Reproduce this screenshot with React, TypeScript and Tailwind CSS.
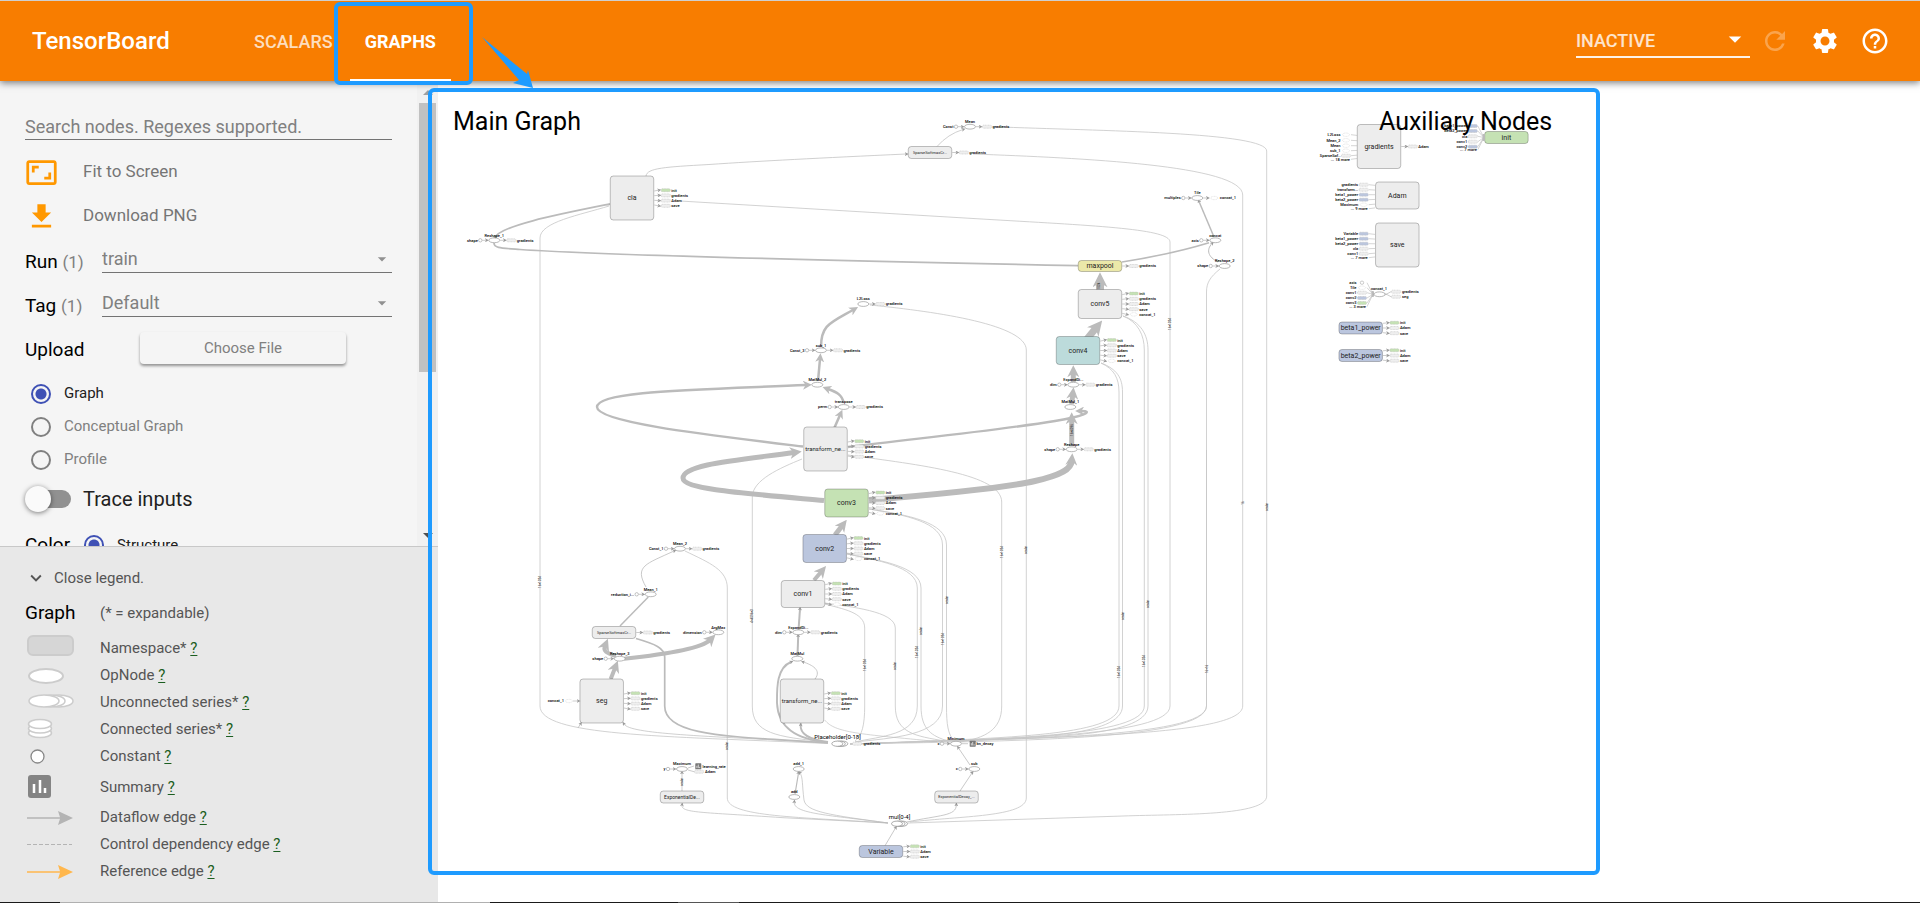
import { useState } from 'react';
import type { ReactNode } from 'react';
import { MdSettings, MdRefresh, MdHelpOutline, MdKeyboardArrowDown, MdArrowDropDown } from 'react-icons/md';

const GREY = '#ededed';
const GREEN = '#c5e2b4';
const BLUE = '#bbc6de';
const TEAL = '#bcdbdb';
const YELLOW = '#ebe8a9';

type Anno = { name: string; kind?: 'box' | 'op' | 'const'; fill?: string };

const init: Anno = { name: 'init', fill: GREEN };
const gradients: Anno = { name: 'gradients' };
const adam: Anno = { name: 'Adam' };
const save: Anno = { name: 'save' };
const concat1: Anno = { name: 'concat_1', kind: 'op' };
const fourOuts = [init, gradients, adam, save];
const fiveOuts = [init, gradients, adam, save, concat1];
const varOuts = [init, adam, save];

type BoxNode = { x: number; y: number; w?: number; h: number; label: string; size: number; fill?: string; outs?: Anno[] };

const boxes: BoxNode[] = [
  { x: 632, y: 198, h: 44, label: 'cla', size: 7, outs: fourOuts },
  { x: 930, y: 152.5, h: 12, label: 'SparseSoftmaxCr...', size: 4, outs: [gradients] },
  { x: 1100, y: 266, h: 11, label: 'maxpool', size: 7, fill: YELLOW, outs: [gradients] },
  { x: 1100, y: 304, h: 29, label: 'conv5', size: 7, outs: fiveOuts },
  { x: 1078, y: 350.5, h: 28, label: 'conv4', size: 7, fill: TEAL, outs: fiveOuts },
  { x: 825.5, y: 449, h: 44, label: 'transform_ne...', size: 6, outs: fourOuts },
  { x: 846.5, y: 503, h: 28, label: 'conv3', size: 7, fill: GREEN, outs: fiveOuts },
  { x: 824.7, y: 548.5, h: 28, label: 'conv2', size: 7, fill: BLUE, outs: fiveOuts },
  { x: 803, y: 594, h: 27, label: 'conv1', size: 7, outs: fiveOuts },
  { x: 802, y: 701, h: 44, label: 'transform_ne...', size: 6, outs: fourOuts },
  { x: 601.7, y: 701, h: 44, label: 'seg', size: 7, outs: fourOuts },
  { x: 614, y: 632.5, h: 12, label: 'SparseSoftmaxCr...', size: 4, outs: [gradients] },
  { x: 682, y: 797, h: 12, label: 'ExponentialDe...', size: 5 },
  { x: 956.5, y: 797, h: 12, label: 'ExponentialDecay_...', size: 4 },
  { x: 881, y: 851.5, h: 12, label: 'Variable', size: 7, fill: BLUE, outs: varOuts },
  { x: 1360.7, y: 328, h: 12, label: 'beta1_power', size: 7, fill: BLUE, outs: varOuts },
  { x: 1360.7, y: 355.5, h: 12, label: 'beta2_power', size: 7, fill: BLUE, outs: varOuts },
  { x: 1379, y: 146.5, h: 44, label: 'gradients', size: 7, outs: [adam] },
  { x: 1397.3, y: 195.5, h: 27, label: 'Adam', size: 7 },
  { x: 1397.3, y: 245, h: 44, label: 'save', size: 7 },
  { x: 1506.4, y: 137.5, h: 12, label: 'init', size: 7, fill: GREEN },
];

type OpData = { x: number; y: number; label: string; input?: string; out?: Anno };

const ops: OpData[] = [
  { x: 970, y: 126.7, label: 'Mean', input: 'Const', out: gradients },
  { x: 494.3, y: 240.3, label: 'Reshape_1', input: 'shape', out: gradients },
  { x: 863.3, y: 304, label: 'L2Loss', out: gradients },
  { x: 821, y: 350.3, label: 'sub_1', input: 'Const_3', out: gradients },
  { x: 817.3, y: 384.7, label: 'MatMul_2' },
  { x: 843.7, y: 407, label: 'transpose', input: 'perm', out: gradients },
  { x: 1073.3, y: 384.7, label: 'ExpandDi...', input: 'dim', out: gradients },
  { x: 1070.3, y: 407, label: 'MatMul_1' },
  { x: 1071.7, y: 449.3, label: 'Reshape', input: 'shape', out: gradients },
  { x: 1197.3, y: 198, label: 'Tile', input: 'multiples', out: concat1 },
  { x: 1215.3, y: 240.3, label: 'concat', input: 'axis' },
  { x: 1224.7, y: 266, label: 'Reshape_2', input: 'shape' },
  { x: 798.3, y: 632.3, label: 'ExpandDi...', input: 'dim', out: gradients },
  { x: 797.3, y: 658.7, label: 'MatMul' },
  { x: 619.7, y: 658.7, label: 'Reshape_3', input: 'shape' },
  { x: 718.3, y: 632.3, label: 'ArgMax', input: 'dimension' },
  { x: 650.7, y: 594.3, label: 'Mean_1', input: 'reduction_i...' },
  { x: 680, y: 548.7, label: 'Mean_2', input: 'Const_1', out: gradients },
  { x: 682, y: 769, label: 'Maximum', input: 'y' },
  { x: 798.7, y: 769, label: 'add_1' },
  { x: 794.3, y: 797, label: 'add' },
  { x: 956, y: 743.7, label: 'Minimum', input: 'x' },
  { x: 974.3, y: 769, label: 'sub', input: 'x' },
];

// [path, stroke width, arrow size]
const edges: [string, number, 's' | 'm' | 'l' | 'x' | ''][] = [
  ['M937 146.5 Q948 134 963 129.5', 0.7, 's'],
  ['M646 176 C647 168 665 167 709 164.5 C760 161 820 158 906 154', 0.7, 's'],
  ['M610 204 C560 214 498 226 495 238', 1.8, 's'],
  ['M494 243 C494 248 500 248 520 249.5 C600 255 800 260 1078 265.7', 1.7, ''],
  ['M821 347 C821 325 830 323 853 310', 2.5, 'm'],
  ['M818 381 L820 359', 2.5, 'm'],
  ['M843.7 403 C842 394 836 392 828 389', 2.5, 'm'],
  ['M834.3 428 L840 415', 2.5, 'm'],
  ['M803 446.5 C700 434 597 422 597 407 C597 391 690 390 806 385', 2.4, 'm'],
  ['M848 447 C930 437 1000 430 1055 421 C1085 416 1094 411 1081 411', 2.4, 'm'],
  ['M824 500.5 C740 493 683 489 683 478 C683 464 740 460 794 452.5', 5, 'l'],
  ['M869 500 C930 495 1000 489 1035 481 C1062 475 1071 469 1071.7 461', 6, 'l'],
  ['M1071.7 446 V420', 5, 'l'],
  ['M1071.7 404 L1072.7 395', 5, 'l'],
  ['M1073.3 382 V373', 5, 'l'],
  ['M1087 339 L1096 328', 7, 'x'],
  ['M1100 290 V282', 8, 'x'],
  ['M1122 262 C1160 256 1185 250 1209 242.7', 1.6, ''],
  ['M1214 237 L1199 201.5', 1.5, 's'],
  ['M1218 262 C1208 257 1206 250 1212 243.5', 1, 's'],
  ['M814 580.3 L821 572', 4, 'l'],
  ['M835 535 L842 526', 5, 'l'],
  ['M798.5 630 L800 609', 2, 's'],
  ['M797.5 656 L798.2 636', 2, 's'],
  ['M828 742.5 C795 739 778 727 777 703 C777 690 776 668 791 662', 1.9, 's'],
  ['M815 679 C822 670 812 665 803.5 662', 0.8, 's'],
  ['M828 742 C805 739 800 732 800.7 725', 1.9, 's'],
  ['M624 658.7 C650 656 700 650 710 640', 4, 'l'],
  ['M616 656 C606 653 603 651 605 646', 4, 'l'],
  ['M610.7 679 L615 668', 4, 'l'],
  ['M620 626 L648.3 597', 1.5, ''],
  ['M646 587 C634 566 646 564 674 551', 0.8, 's'],
  ['M636 638.5 C655 644 664.7 648 664.7 657 V706 C664.7 737 730 736 828 743', 1.7, ''],
  ['M682 791 V773', 0.7, 's'],
  ['M888 823 L783 817.7 C700 812 681 813 682 805', 0.7, 's'],
  ['M795 794 L798.5 773', 1.2, 's'],
  ['M888 823 C830 815 806 812 804 800 C802 785 803 777 800 773', 0.7, 's'],
  ['M888 823 C830 815 793 814 794.3 802', 0.7, 's'],
  ['M885 845.7 L895.5 828', 0.8, 's'],
  ['M906.7 822 C940 815 956.3 816 956.3 805', 0.8, 's'],
  ['M960 791 L972 773', 0.8, 's'],
  ['M970 765 L958.5 748', 0.8, 's'],
  ['M824.7 720 C835 733 860 734 937 741.5', 0.6, ''],
  ['M828 742.5 C700 736 630 734 624 724', 0.7, 's'],
  ['M578 728 L580.5 724', 0.8, 's'],
];

// thin edges that run down the sides and join the placeholders at the bottom
const loops = [
  'M993 126.7 C1100 131 1266.7 132 1266.7 151 V796 C1266.7 816 1180 814 1123 816 L908 823',
  'M973 154 C1080 158 1242.7 165 1242.7 195 V706 C1242.7 737 1050 737 850 744',
  'M680 201 L990 219.5 C1100 226 1170 229 1170 242 V706 C1170 737 1000 739 850 744',
  'M609 206 C580 215 540 222 540 238 V706 C540 736 660 736 828 743.5',
  'M870 305 C940 312 1026.3 325 1026.3 350 V798 C1026.3 817 960 816 910 822',
  'M1220 269 C1210 277 1206.5 283 1206.5 292 V706 C1206.5 739 1000 739 850 744',
  'M1206.5 450 V706 C1206.5 741 1000 741 850 744',
  'M1123 316 C1138 322 1144.3 335 1144.3 350 V706 C1144.3 737 1000 739 850 744',
  'M1123 316 C1141 322 1148 335 1148 350 V706 C1148 740 1020 737 960 741',
  'M1101 363 C1114 369 1119 378 1119 392 V706 C1119 737 1000 738 850 744',
  'M1101 363 C1117 369 1122.5 378 1122.5 392 V706 C1122.5 738 1020 737 960 741',
  'M869 509 C905 515 942.5 522 942.5 545 V706 C942.5 736 890 738 855 742',
  'M869 509 C908 515 946.5 522 946.5 545 V706 C946.5 725 948 734 954 741',
  'M847 554 C875 560 917.3 566 917.3 588 V706 C917.3 736 880 736 855 742',
  'M847 554 C878 560 921 566 921 588 V706 C921 730 932 736 948 741',
  'M825 604 C842 609 864.7 612 864.7 628 V706 C864.7 725 862 736 855 741',
  'M825 603 C850 607 895.3 611 895.3 628 V706 C895.3 733 915 736 945 741',
  'M802 459 C780 468 752.3 480 752.3 497 V706 C752.3 733 775 737 828 742',
  'M848 455 C920 465 1001.7 474 1001.7 502 V706 C1001.7 730 985 738 960 742',
  'M685 551 C710 563 727.3 570 727.3 588 V798 C727.3 817 800 817 888 823',
];

const edgeLabels: [number, number, string][] = [
  [540, 582, '16×1024'], [752.3, 616, '4×4096×3'], [727.3, 746, 'scalar'], [864.7, 665, '16×1024'],
  [895.3, 666, 'scalar'], [917.3, 652, '16×1024'], [921, 631, 'scalar'], [942.5, 639, '16×1024'],
  [946.5, 600, 'scalar'], [1001.7, 552, '16×1024'], [1026.3, 550, 'scalar'], [1119, 672, '16×1024'],
  [1122.5, 616, 'scalar'], [1144.3, 661, '16×1024'], [1148, 604, 'scalar'], [1206.5, 669, '16×16'],
  [1242.7, 503, '16'], [1266.7, 507, 'scalar'], [1170, 324, '16×1024'], [682, 782, 'scalar'],
  [1099, 286, '1024'], [1071.7, 430, '16×4096'],
];

const Caption = ({ x, y, text, anchor = 'start' }: { x: number; y: number; text: string; anchor?: 'start' | 'middle' | 'end' }) => (
  <text x={x} y={y} fontSize="4" textAnchor={anchor} fontWeight="500">{text}</text>
);

// little icon that stands for a neighbour node
function Mini({ x, y, anno }: { x: number; y: number; anno: Anno }) {
  if (anno.kind === 'op') return <ellipse cx={x} cy={y} rx="3.5" ry="1.7" fill="white" stroke="#ccc" strokeWidth="0.5" strokeDasharray="1 0.5" />;
  if (anno.kind === 'const') return <circle cx={x} cy={y} r="1.7" fill="white" stroke="#999" strokeWidth="0.5" />;
  return <rect x={x - 4.5} y={y - 1.5} width="9" height="3" rx="1" fill={anno.fill ?? '#efefef'} stroke="#bbb" strokeWidth="0.5" strokeDasharray="1 0.5" />;
}

function Outs({ x, y, items }: { x: number; y: number; items: Anno[] }) {
  return (
    <>
      {items.map((anno, i) => {
        const ay = y + (i - (items.length - 1) / 2) * 5.2;
        return (
          <g key={anno.name}>
            <path d={`M${x + 0.5} ${y + (ay - y) * 0.9} L${x + 5} ${ay}`} stroke="#999" strokeWidth="0.5" markerEnd="url(#arrow-s)" />
            <Mini x={x + 12} y={ay} anno={anno} />
            <Caption x={x + 17.5} y={ay + 1.4} text={anno.name} />
          </g>
        );
      })}
    </>
  );
}

function Ins({ x, y, items, target }: { x: number; y: number[]; items: Anno[]; target: [number, number] }) {
  return (
    <>
      {items.map((anno, i) => {
        const last = i === items.length - 1;
        return (
          <g key={anno.name}>
            <path d={`M${x + 5} ${y[i]} L${target[0]} ${target[1] + (y[i] - target[1]) * (target[1] > 290 || target[1] < 140 ? 0.15 : 0.94)}`} stroke="#aaa" strokeWidth="0.5" />
            {!last && <Mini x={x} y={y[i]} anno={anno} />}
            <Caption x={last ? x + 4 : x - 5.5} y={y[i] + 1.4} text={anno.name} anchor="end" />
          </g>
        );
      })}
    </>
  );
}

function Box({ x, y, w = 43.5, h, label, size, fill = GREY, outs }: BoxNode) {
  return (
    <g>
      <rect x={x - w / 2} y={y - h / 2} width={w} height={h} rx="3" fill={fill} stroke="#000" strokeOpacity="0.3" strokeWidth="0.8" />
      <text x={x} y={y + size * 0.34} fontSize={size} textAnchor="middle" fill="#222">{label}</text>
      {outs && <Outs x={x + w / 2} y={y} items={outs} />}
    </g>
  );
}

function Op({ x, y, label, input, out }: OpData) {
  return (
    <g>
      {input && (
        <>
          <path d={`M${x - 12} ${y} H${x - 8}`} stroke="#999" strokeWidth="0.5" markerEnd="url(#arrow-s)" />
          <circle cx={x - 14} cy={y} r="1.7" fill="white" stroke="#888" strokeWidth="0.5" />
          <Caption x={x - 16.5} y={y + 1.4} text={input} anchor="end" />
        </>
      )}
      {out && (
        <>
          <path d={`M${x + 6} ${y} H${x + 10}`} stroke="#999" strokeWidth="0.5" markerEnd="url(#arrow-s)" />
          <Mini x={x + 17} y={y} anno={out} />
          <Caption x={x + 22.5} y={y + 1.4} text={out.name} />
        </>
      )}
      <ellipse cx={x} cy={y} rx="5.5" ry="2.4" fill="white" stroke="#999" strokeWidth="0.7" />
      <Caption x={x} y={y - 3.8} text={label} anchor="middle" />
    </g>
  );
}

function Series({ x, y }: { x: number; y: number }) {
  return (
    <g fill="white" stroke="#8a8a8a" strokeWidth="0.7">
      <ellipse cx={x + 5} cy={y} rx="5.5" ry="2.6" />
      <ellipse cx={x + 2.5} cy={y} rx="5.5" ry="2.6" />
      <ellipse cx={x} cy={y} rx="5.5" ry="2.6" />
    </g>
  );
}

function SummaryIcon({ x, y }: { x: number; y: number }) {
  return (
    <g>
      <rect x={x - 3} y={y - 3} width="6" height="6" rx="0.6" fill="#777" />
      <path d={`M${x - 1.4} ${y + 1.8} V${y - 0.5} M${x} ${y + 1.8} V${y - 1.8} M${x + 1.4} ${y + 1.8} V${y + 0.6}`} stroke="white" strokeWidth="0.7" />
    </g>
  );
}

const ArrowMarker = ({ id, size }: { id: string; size: number }) => (
  <marker id={id} viewBox="0 0 10 10" refX="3.5" refY="5" markerWidth={size} markerHeight={size} markerUnits="userSpaceOnUse" orient="auto">
    <path d="M0 0 L10 5 L0 10 L3 5 Z" fill={size < 6 ? '#999' : '#bbb'} />
  </marker>
);

function GraphCanvas() {
  return (
    <svg viewBox="438 81 1482 821" preserveAspectRatio="xMinYMin meet" className="block h-full w-full font-['Roboto',sans-serif]" fill="none" role="img" aria-label="Model graph">
      <defs>
        <ArrowMarker id="arrow-s" size={4} />
        <ArrowMarker id="arrow-m" size={9} />
        <ArrowMarker id="arrow-l" size={12} />
        <ArrowMarker id="arrow-x" size={15} />
      </defs>
      {loops.map((d) => <path key={d} d={d} stroke="#c6c6c6" strokeWidth="0.8" />)}
      {edges.map(([d, width, head]) => (
        <path key={d} d={d} stroke="#bbb" strokeWidth={width} markerEnd={head ? `url(#arrow-${head})` : undefined} />
      ))}
      <g fill="#333">
        {edgeLabels.map(([x, y, text]) => (
          <text key={`${x}-${y}`} x={x} y={y} fontSize="3" fontWeight="500" textAnchor="middle" transform={`rotate(-90 ${x} ${y}) translate(0 1)`}>{text}</text>
        ))}
      </g>
      <g fill="#000">
        {boxes.map((box) => <Box key={`${box.x}-${box.y}`} {...box} />)}
        {ops.map((op) => <Op key={`${op.x}-${op.y}`} {...op} />)}

        <Series x={837.3} y={743.7} />
        <text x="837.5" y="739" fontSize="6" textAnchor="middle">Placeholder[0-18]</text>
        <Mini x={857} y={743.7} anno={gradients} />
        <Caption x={863.5} y={745} text="gradients" />
        <Series x={897} y={823.7} />
        <text x="899.5" y="819" fontSize="6" textAnchor="middle">mul[0-4]</text>

        <path d="M962 743.7 H968" stroke="#999" strokeWidth="0.5" />
        <SummaryIcon x={972.7} y={743.7} />
        <Caption x={976.5} y={745} text="bn_decay" />
        <path d="M688 768 L694 766 M688 770 L694 771.7" stroke="#999" strokeWidth="0.5" />
        <SummaryIcon x={698.3} y={766.3} />
        <Caption x={702.5} y={768} text="learning_rate" />
        <Mini x={699} y={771.7} anno={adam} />
        <Caption x={705} y={773} text="Adam" />
        <path d="M573 701 H578" stroke="#999" strokeWidth="0.5" markerEnd="url(#arrow-s)" />
        <Mini x={569} y={701} anno={concat1} />
        <Caption x={564} y={702.3} text="concat_1" anchor="end" />

        <Ins x={1346} y={[134.7, 140.3, 145.7, 150.7, 155.7, 159.3]} target={[1357, 146.5]}
          items={[{ name: 'L2Loss', kind: 'op' }, { name: 'Mean_2', kind: 'op' }, { name: 'Mean', kind: 'op' }, { name: 'sub_1', kind: 'op' }, { name: 'SparseSof..' }, { name: '... 18 more' }]} />
        <Ins x={1363.7} y={[184.7, 189.7, 194.7, 199.7, 204.7, 208.7]} target={[1375, 195.5]}
          items={[{ name: 'gradients' }, { name: 'transform...' }, { name: 'beta1_power', fill: BLUE }, { name: 'beta2_power', fill: BLUE }, { name: 'Maximum', kind: 'op' }, { name: '... 9 more' }]} />
        <Ins x={1363.7} y={[233.7, 238.7, 243.7, 248.7, 253.7, 257.7]} target={[1375, 245]}
          items={[{ name: 'Variable', fill: BLUE }, { name: 'beta1_power', fill: BLUE }, { name: 'beta2_power', fill: BLUE }, { name: 'cla' }, { name: 'conv1' }, { name: '... 7 more' }]} />
        <Ins x={1362} y={[282.7, 287.7, 292.7, 298, 303, 306.7]} target={[1372, 294.3]}
          items={[{ name: 'axis', kind: 'const' }, { name: 'Tile', kind: 'op' }, { name: 'conv1' }, { name: 'conv2', fill: BLUE }, { name: 'conv3', fill: GREEN }, { name: '... 3 more' }]} />
        <Ins x={1472.8} y={[126, 131, 136.3, 141.7, 146.7, 149.7]} target={[1483, 137.5]}
          items={[{ name: 'beta1_power', fill: BLUE }, { name: 'beta2_power', fill: BLUE }, { name: 'cla' }, { name: 'conv1' }, { name: 'conv2', fill: BLUE }, { name: '... 7 more' }]} />
        <rect x="1371.5" y="291" width="2.5" height="6" rx="1" fill="#bbb" />
        <rect x="1482.5" y="134" width="2.5" height="7" rx="1" fill="#bbb" />
        <path d="M1384 293 L1391 296.7 M1384 295.5 L1391 291.7" stroke="#999" strokeWidth="0.5" />
        <ellipse cx="1379.5" cy="294.3" rx="5.5" ry="2.4" fill="white" stroke="#999" strokeWidth="0.7" />
        <Caption x={1379} y={290} text="concat_1" anchor="middle" />
        <Mini x={1396} y={291.7} anno={gradients} />
        <Caption x={1402} y={293} text="gradients" />
        <Mini x={1396} y={296.7} anno={gradients} />
        <Caption x={1402} y={298} text="seg" />
      </g>
      <g fill="#000" fontSize="25">
        <text x="453" y="130">Main Graph</text>
        <text x="1379" y="130">Auxiliary Nodes</text>
      </g>
    </svg>
  );
}

function Radio({ label, name, checked, onChange }: { label: string; name: string; checked: boolean; onChange: () => void }) {
  return (
    <label className={`flex h-[33px] items-center gap-[13px] text-[15px] ${checked ? 'text-[#212121]' : 'text-[#808080]'}`}>
      <input
        type="radio"
        name={name}
        checked={checked}
        onChange={onChange}
        className="h-5 w-5 appearance-none rounded-full border-2 border-[#808080] checked:border-[#3f51b5] checked:bg-[radial-gradient(circle,#3f51b5_5px,transparent_6px)]"
      />
      {label}
    </label>
  );
}

function Picker({ id, label, value }: { id: string; label: string; value: string }) {
  return (
    <div className="flex h-11 items-center">
      <label htmlFor={id} className="w-[77px] shrink-0 text-[19px]">
        {label} <span className="text-[17px] text-[#808080]">(1)</span>
      </label>
      <div className="relative mb-0.5 flex-1">
        <select id={id} className="block h-6 w-full appearance-none border-b border-[#737373] bg-transparent pb-1 text-[18px] leading-5 text-[#808080]">
          <option>{value}</option>
        </select>
        <MdArrowDropDown className="pointer-events-none absolute right-0 top-0 h-5 w-5 text-[#909090]" />
      </div>
    </div>
  );
}

const legend: { name: string; tall?: boolean; icon: ReactNode }[] = [
  { name: 'Namespace*', icon: <rect x="2" y="1" width="45" height="19" rx="5" fill="#d6d6d6" stroke="#ccc" strokeWidth="2" /> },
  { name: 'OpNode', icon: <ellipse cx="20" cy="14" rx="17" ry="7" fill="white" stroke="#ccc" strokeWidth="2" /> },
  {
    name: 'Unconnected series*',
    icon: (
      <g fill="white" stroke="#ccc" strokeWidth="1.5">
        <ellipse cx="33" cy="12" rx="14" ry="6" />
        <ellipse cx="25" cy="12" rx="14" ry="6" />
        <ellipse cx="18" cy="12" rx="15" ry="6" />
      </g>
    ),
  },
  {
    name: 'Connected series*',
    icon: (
      <g fill="white" stroke="#ccc" strokeWidth="1.5">
        <ellipse cx="14" cy="17" rx="11.5" ry="4.5" />
        <ellipse cx="14" cy="12.5" rx="11.5" ry="4.5" />
        <ellipse cx="14" cy="8" rx="11.5" ry="4.5" />
      </g>
    ),
  },
  { name: 'Constant', icon: <circle cx="11.5" cy="13.5" r="6.5" fill="white" stroke="#888" strokeWidth="1.3" /> },
  {
    name: 'Summary',
    tall: true,
    icon: (
      <>
        <rect x="2" y="1" width="23" height="23" rx="3" fill="#848484" />
        <path d="M8 19 V10 M14 19 V6 M19 19 V14" stroke="white" strokeWidth="2.5" />
      </>
    ),
  },
  { name: 'Dataflow edge', icon: <path d="M1 13.200 H34 L32 7 L47 14 L32 21 L34 14.800 H1 Z" fill="#b4b4b4" /> },
  { name: 'Control dependency edge', icon: <path d="M1 13.500 H46" stroke="#b4b4b4" strokeDasharray="4 2" /> },
  { name: 'Reference edge', icon: <path d="M1 13.200 H34 L32 7 L47 14 L32 21 L34 14.800 H1 Z" fill="#ffb74d" /> },
];

export default function App() {
  const [mode, setMode] = useState('Graph');
  const [search, setSearch] = useState('');
  const [trace, setTrace] = useState(false);

  return (
    <div className="flex h-screen flex-col overflow-hidden bg-white font-['Roboto',sans-serif] text-black">
      <header className="relative z-10 flex h-[81px] shrink-0 items-center border-t border-[#cfcfcf] bg-[#f87d00] pl-8 pr-[30px] text-white shadow-[0_2px_7px_rgba(0,0,0,0.5)]">
        <h1 className="w-[207px] text-[24px] font-medium">TensorBoard</h1>
        <nav className="flex h-full gap-0.5 text-[18px] font-medium">
          <a href="#scalars" className="flex items-center px-[15px] text-white/75">SCALARS</a>
          <a href="#graphs" className="relative flex items-center border-b-2 border-white px-[15px] pt-0.5 font-bold">
            GRAPHS
            <span className="absolute -bottom-[6px] -left-4 -right-[22px] top-px rounded-md border-4 border-[#1e9bff]" />
          </a>
        </nav>
        <div className="relative ml-auto">
          <select aria-label="Reload mode" className="block h-[34px] w-[174px] appearance-none border-b-2 border-white/90 bg-transparent text-[18px] font-medium text-white/80">
            <option>INACTIVE</option>
          </select>
          <MdArrowDropDown className="pointer-events-none absolute right-0 top-0 h-[30px] w-[30px]" />
        </div>
        <div className="ml-[10px] flex gap-5">
          <button aria-label="Reload" className="opacity-30"><MdRefresh size={30} /></button>
          <button aria-label="Settings"><MdSettings size={30} /></button>
          <button aria-label="Help"><MdHelpOutline size={30} /></button>
        </div>
      </header>

      <div className="flex min-h-0 flex-1">
        <aside className="flex w-[438px] shrink-0 flex-col bg-[#f5f5f5]">
          <div className="flex min-h-0 flex-1 overflow-hidden">
            <div className="flex-1 pl-[25px] pr-[25px] pt-[33px]">
              <input
                type="text"
                aria-label="Search nodes"
                value={search}
                onChange={(e) => setSearch(e.target.value)}
                placeholder="Search nodes. Regexes supported."
                className="block h-[26px] w-full border-b border-[#737373] bg-transparent text-[18px] placeholder:text-[#808080]"
              />
              <button className="mt-[10px] flex h-11 items-center gap-[25px] text-[17px] text-[#757575]">
                <svg viewBox="0 0 24 24" className="h-[33px] w-[33px]" fill="#ff9800">
                  <path d="M19 12h-2v3h-3v2h5v-5zM7 9h3V7H5v5h2V9zm14-6H3c-1.100 0-2 .9-2 2v14c0 1.100.9 2 2 2h18c1.100 0 2-.9 2-2V5c0-1.100-.9-2-2-2zm0 16H3V5h18v14z" />
                </svg>
                Fit to Screen
              </button>
              <button className="flex h-11 items-center gap-[25px] text-[17px] text-[#757575]">
                <svg viewBox="0 0 24 24" className="h-[33px] w-[33px]" fill="#ff9800">
                  <path d="M19 9h-4V3H9v6H5l7 7 7-7zM5 18v2h14v-2H5z" />
                </svg>
                Download PNG
              </button>
              <div className="mt-[2px]">
                <Picker id="run" label="Run" value="train" />
                <Picker id="tag" label="Tag" value="Default" />
              </div>
              <div className="flex h-11 items-center">
                <span className="w-[115px] text-[19px]">Upload</span>
                <button className="mb-1 h-8 w-[206px] rounded text-[15px] text-[#808080] shadow-[0_2px_3px_rgba(0,0,0,0.4)]">Choose File</button>
              </div>
              <div className="mt-[5px] pl-[6px]">
                {['Graph', 'Conceptual Graph', 'Profile'].map((name) => (
                  <Radio key={name} name="mode" label={name} checked={mode === name} onChange={() => setMode(name)} />
                ))}
              </div>
              <label className="flex h-[46px] items-center gap-3 text-[20px] text-[#212121]">
                <input
                  type="checkbox"
                  checked={trace}
                  onChange={(e) => setTrace(e.target.checked)}
                  className="ml-1 h-[18px] w-[42px] appearance-none rounded-full bg-[#919191] before:-ml-1 before:-mt-1 before:block before:h-[26px] before:w-[26px] before:rounded-full before:bg-[#fafafa] before:shadow-[0_1px_5px_rgba(0,0,0,0.5)] before:content-[''] checked:before:ml-5"
                />
                Trace inputs
              </label>
              <div className="flex h-[46px] items-center gap-[14px]">
                <span className="text-[19px]">Color</span>
                <Radio name="color" label="Structure" checked onChange={() => {}} />
              </div>
            </div>
            <div className="flex w-[21px] flex-col items-center justify-between bg-[#f1f1f1] pb-2 pt-[9px]">
              <div className="flex flex-col items-center gap-2">
                <svg width="10" height="5"><path d="M0 5 L5 0 L10 5 Z" fill="#a0a0a0" /></svg>
                <div className="h-[269px] w-[17px] bg-[#c1c1c1]" />
              </div>
              <svg width="10" height="5"><path d="M0 0 L5 5 L10 0 Z" fill="#505050" /></svg>
            </div>
          </div>

          <section className="border-t border-[#c8c8c8] bg-[#e8e8e8] pb-[17px] pl-[25px] pt-4 text-[15px] text-[#555]">
            <button className="flex h-[30px] items-center gap-[7px]">
              <MdKeyboardArrowDown size={22} />
              Close legend.
            </button>
            <div className="mb-[2px] flex h-10 items-center">
              <h2 className="w-[75px] text-[19px] text-black">Graph</h2>
              <span>(* = expandable)</span>
            </div>
            <ul className="pl-px">
              {legend.map(({ name, tall, icon }) => (
                <li key={name} className={`flex items-center ${tall ? 'h-[34px]' : 'h-[27px]'}`}>
                  <svg width="50" height="27" className="mr-6 block shrink-0" fill="none">{icon}</svg>
                  <span>{name} <a href="#help" className="text-[#1b5e20] underline underline-offset-2">?</a></span>
                </li>
              ))}
            </ul>
          </section>
        </aside>

        <main className="relative min-w-0 flex-1">
          <GraphCanvas />
          <div className="pointer-events-none absolute -left-[10px] top-[7px] z-20 h-[787px] w-[1172px] rounded-md border-4 border-[#1e9bff]" />
          <svg width="56" height="56" viewBox="0 0 56 56" className="pointer-events-none absolute -top-[45px] left-[42px] z-20">
            <path d="M2 1 L47 38 L48 34 L53 52 L33 47 L39 44 Z" fill="#1e9bff" />
          </svg>
        </main>
      </div>
      <footer className="flex h-px shrink-0 bg-[#1a1a1a]">
        <div className="ml-[60px] w-[430px] bg-[#b0b0b0]" />
        <div className="ml-[188px] w-[61px] bg-[#555]" />
      </footer>
    </div>
  );
}
